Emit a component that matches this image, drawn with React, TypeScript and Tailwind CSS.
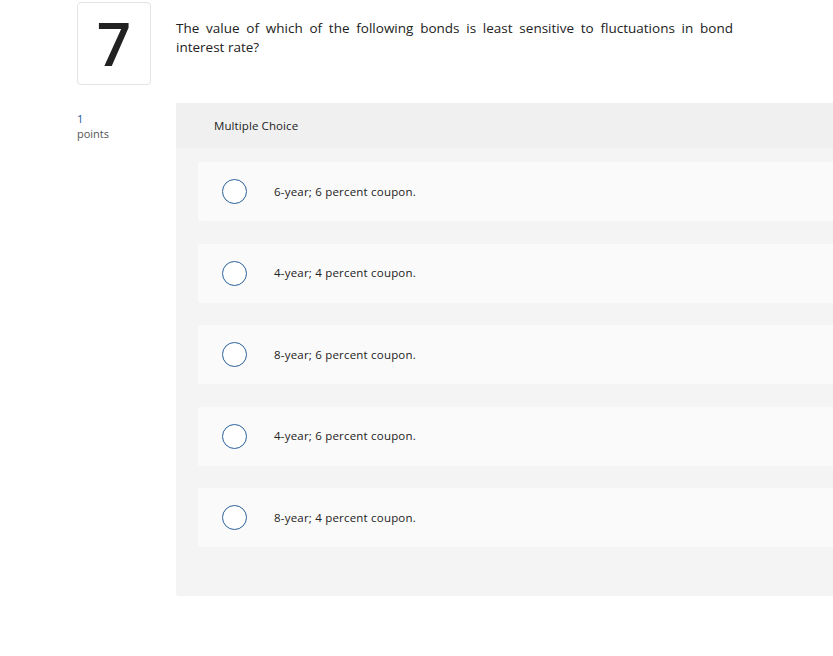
import React from "react";

const options = [
  "6-year; 6 percent coupon.",
  "4-year; 4 percent coupon.",
  "8-year; 6 percent coupon.",
  "4-year; 6 percent coupon.",
  "8-year; 4 percent coupon.",
];

export default function App() {
  return (
    <div
      className="w-[833px] h-[656px] bg-white overflow-hidden text-[#222]"
      style={{ fontFamily: '"Open Sans", "Noto Sans", sans-serif' }}
    >
      <div className="flex pt-[2px]">
        <div className="w-[176px] pl-[77px] shrink-0">
          <div className="w-[74px] h-[83px] border border-[#e3e3e3] rounded-[4px] flex items-center justify-center">
            <span className="text-[60px] leading-none text-[#222] font-semibold -mt-[2px]">
              7
            </span>
          </div>
          <div className="mt-[26px] text-[11px] leading-[15px]">
            <div className="text-[#1f5a96]">1</div>
            <div className="text-[#555]">points</div>
          </div>
        </div>
        <div className="flex-1 min-w-0">
          <p className="w-[557px] pt-[17px] text-[13.5px] leading-[19px] text-[#222]">
            <span className="block text-justify [text-align-last:justify]">
              The value of which of the following bonds is least sensitive to fluctuations in bond
            </span>
            <span className="block">interest rate?</span>
          </p>
          <div className="mt-[46px] h-[493px] bg-[#f4f4f4] rounded-bl-[3px]">
            <div className="h-[45px] bg-[#f0f0f0] flex items-center pl-[38px] text-[11.5px] tracking-[0.1px] text-[#222]">
              Multiple Choice
            </div>
            <div className="pt-[14px] pl-[22px] flex flex-col gap-[22.5px]">
              {options.map((o) => (
                <div
                  key={o}
                  className="h-[59px] bg-[#fafafa] rounded-l-[3px] flex items-center pl-[24px]"
                >
                  <span className="w-[25px] h-[25px] rounded-full border-[1.5px] border-[#2a619b] bg-white shrink-0" />
                  <span className="ml-[27px] text-[11.5px] tracking-[0.2px] text-[#222]">{o}</span>
                </div>
              ))}
            </div>
          </div>
        </div>
      </div>
    </div>
  );
}
